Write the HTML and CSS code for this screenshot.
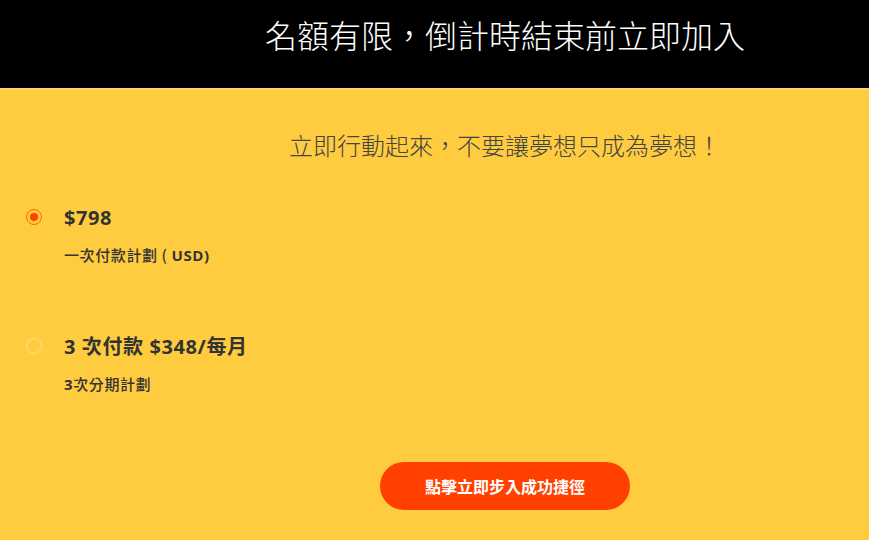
FILE: index.html
```html
<!DOCTYPE html>
<html lang="zh-Hant">
<head>
<meta charset="utf-8">
<link rel="stylesheet" href="styles.css">
</head>
<body>
<header class="top">
  <h1 class="top-title">名額有限，倒計時結束前立即加入</h1>
</header>
<main class="panel">
  <p class="slogan">立即行動起來，不要讓夢想只成為夢想！</p>
  <div class="plans">
    <label class="plan">
      <span class="radio checked"></span>
      <span class="plan-body">
        <span class="plan-price">$798</span>
        <span class="plan-desc">一次付款計劃 ( <b class="latin">USD)</b></span>
      </span>
    </label>
    <label class="plan">
      <span class="radio"></span>
      <span class="plan-body">
        <span class="plan-price">3 次付款 $348/每月</span>
        <span class="plan-desc"><b class="latin">3</b>次分期計劃</span>
      </span>
    </label>
  </div>
  <div class="cta-wrap">
    <button class="cta">點擊立即步入成功捷徑</button>
  </div>
</main>
</body>
</html>
```

FILE: styles.css
```css
html, body {
  margin: 0;
  padding: 0;
  background: #ffcc40;
}
body {
  width: 869px;
  height: 540px;
  overflow: hidden;
  font-family: "Noto Sans CJK TC", sans-serif;
}
.top {
  background: #000;
  height: 88px;
  padding-left: 141px;
  display: flex;
  justify-content: center;
  border-bottom: 2px solid #ffd66a;
}
.top-title {
  margin: 11px 0 0;
  color: #fff;
  font-weight: 300;
  font-size: 32px;
  line-height: 46px;
  letter-spacing: 0;
}
.panel {
  display: flex;
  flex-direction: column;
}
.slogan {
  margin: 38px 0 0 141px;
  text-align: center;
  color: #444;
  font-size: 24px;
  font-weight: 300;
  line-height: 34px;
}
.plans {
  display: flex;
  flex-direction: column;
  gap: 67px;
  margin-top: 42px;
  padding-left: 26px;
}
.plan {
  display: flex;
  gap: 22px;
  align-items: flex-start;
}
.radio {
  width: 16px;
  height: 16px;
  box-sizing: border-box;
  border-radius: 50%;
  border: 1.5px solid rgba(255,255,255,0.4);
  margin-top: 5px;
  flex: none;
  position: relative;
}
.radio.checked {
  border-color: #ff6a00;
}
.radio.checked::after {
  content: "";
  position: absolute;
  left: 2.5px;
  top: 2.5px;
  width: 8px;
  height: 8px;
  border-radius: 50%;
  background: #ff4000;
}
.plan-body {
  display: flex;
  flex-direction: column;
  gap: 12px;
}
.plan-price {
  font-family: "Open Sans", "Noto Sans CJK TC", sans-serif;
  font-weight: 700;
  font-size: 20px;
  line-height: 28px;
  color: #333;
  letter-spacing: 0.6px;
}
.plan-desc {
  font-family: "Noto Sans CJK TC", sans-serif;
  font-weight: 500;
  font-size: 15px;
  line-height: 22px;
  color: #333;
  letter-spacing: 0.6px;
}
.latin {
  font-family: "Open Sans", sans-serif;
  font-weight: 700;
  font-size: 15px;
}
.cta-wrap {
  display: flex;
  justify-content: center;
  padding-left: 141px;
  margin-top: 67px;
}
.cta {
  width: 250px;
  height: 48px;
  border: none;
  border-radius: 24px;
  background: #ff4000;
  color: #fff;
  font-family: "Noto Sans CJK TC", sans-serif;
  font-weight: 700;
  font-size: 16px;
  letter-spacing: 0;
}
```
